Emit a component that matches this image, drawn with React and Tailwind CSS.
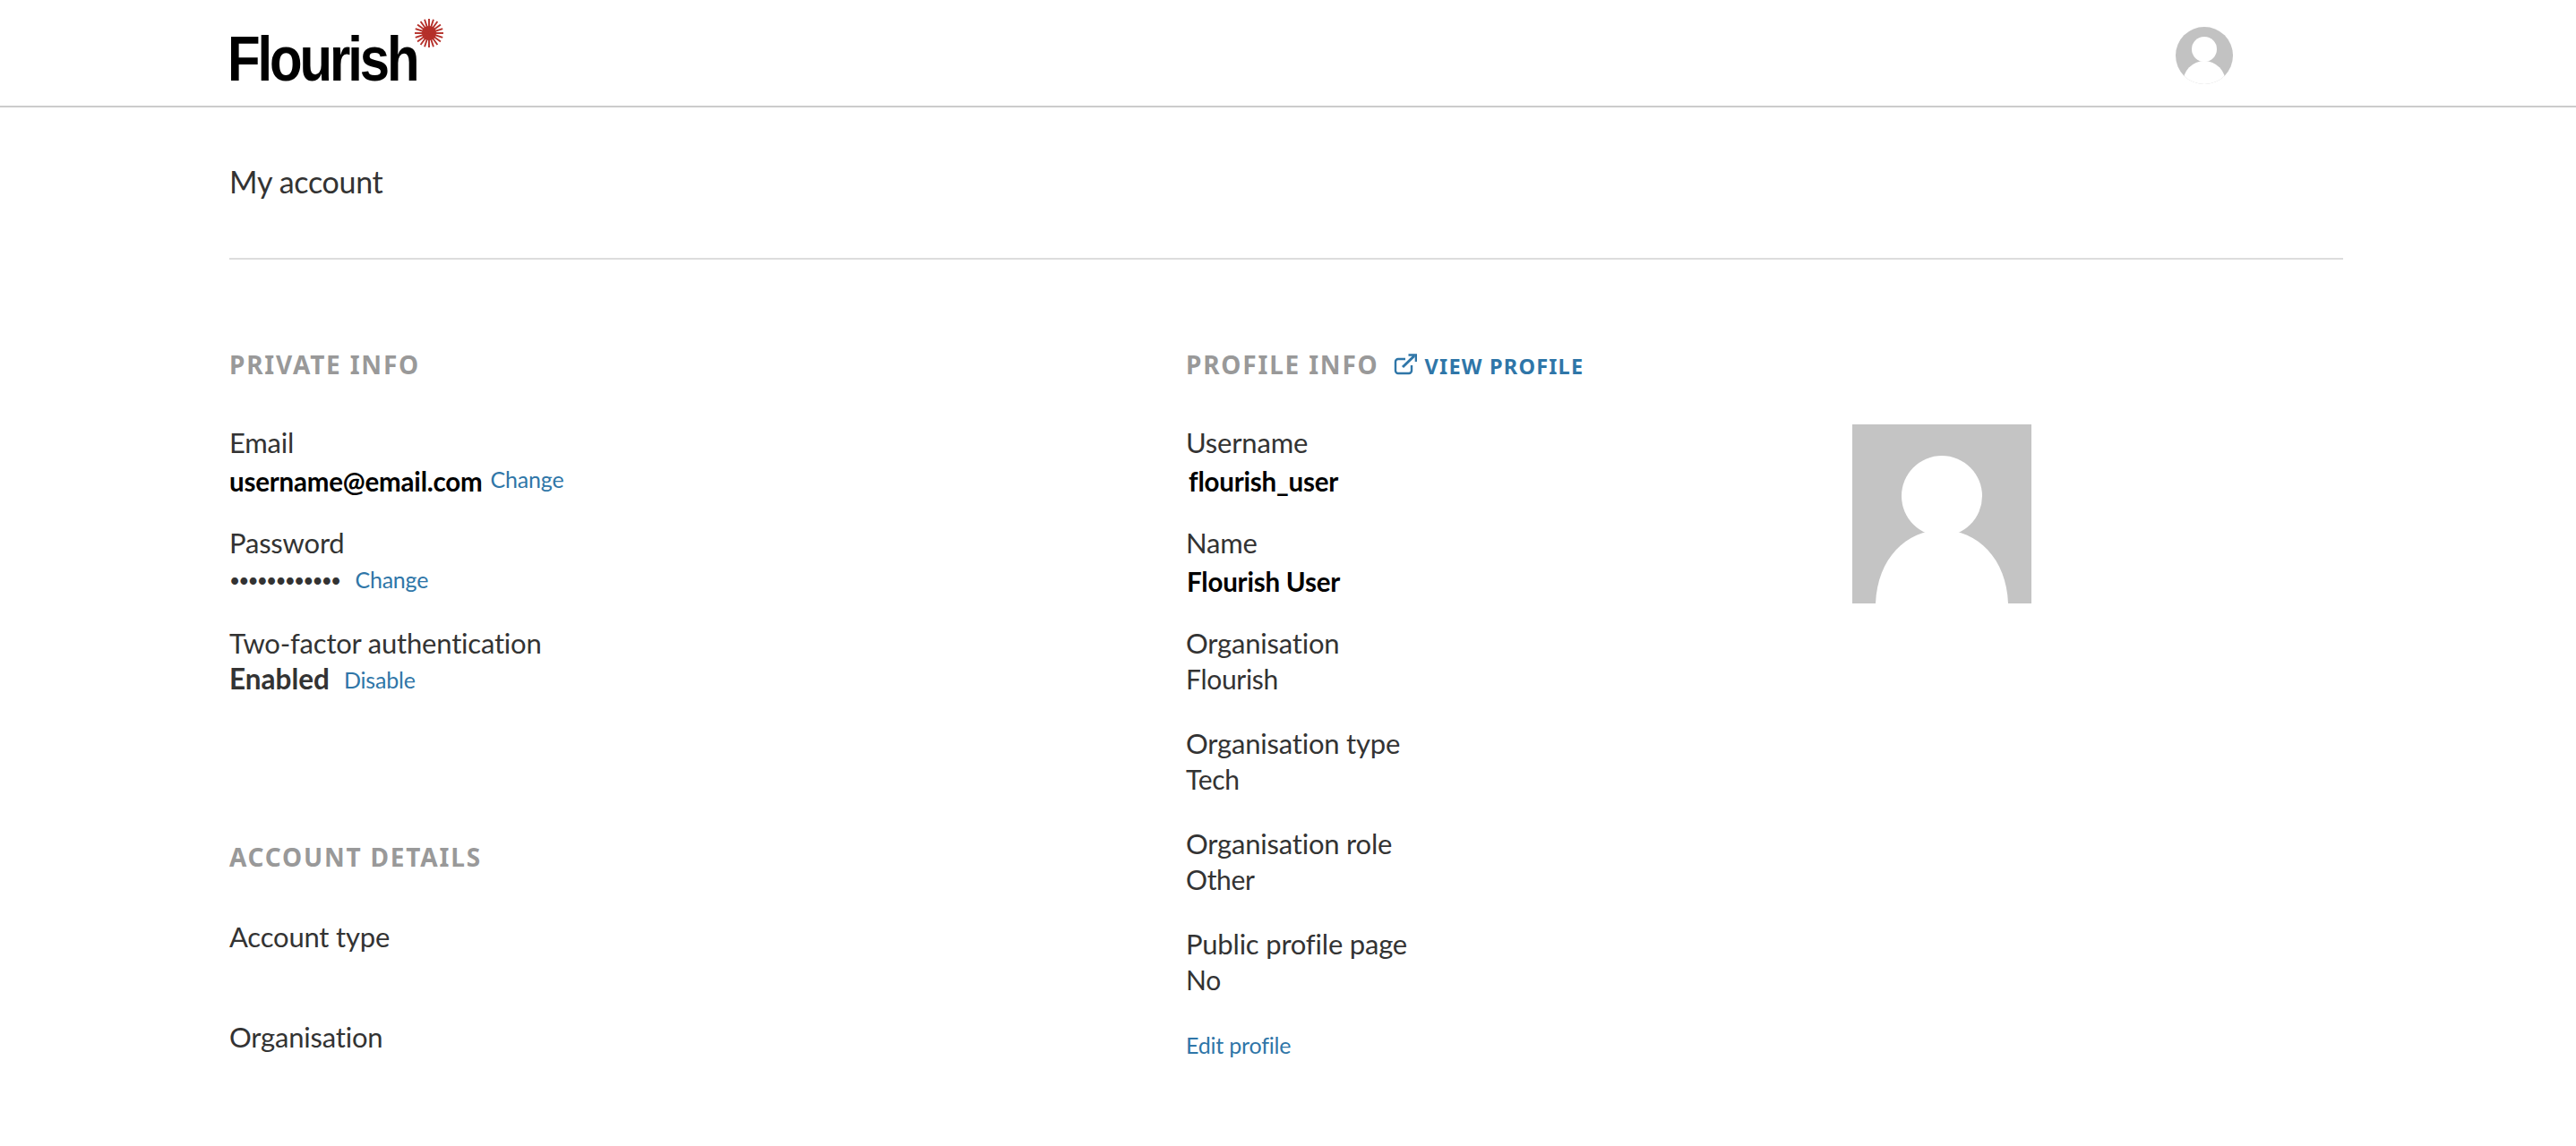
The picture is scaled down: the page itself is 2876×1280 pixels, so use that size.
import React from "react";

const font = { fontFamily: '"Lato", "Noto Sans", sans-serif' };
const noto = { fontFamily: '"Noto Sans", sans-serif' };

function Sun() {
  const rays = Array.from({ length: 20 }, (_, i) => i * 18);
  return (
    <svg width="36" height="36" viewBox="-18 -18 36 36" className="ml-[-3px] mt-[-2px]">
      <circle r="8" fill="#b5302a" />
      {rays.map((r) => (
        <line key={r} x1="0" y1="0" x2="16" y2="0" stroke="#b5302a" strokeWidth="1.9" transform={`rotate(${r})`} />
      ))}
    </svg>
  );
}

function Avatar({ size }) {
  return (
    <svg width={size} height={size} viewBox="0 0 64 64" className="block">
      <defs>
        <clipPath id="avatar-clip">
          <circle cx="32" cy="32" r="32" />
        </clipPath>
      </defs>
      <circle cx="32" cy="32" r="32" fill="#c2c2c2" />
      <g clipPath="url(#avatar-clip)" fill="#fff">
        <circle cx="32" cy="25" r="14" />
        <ellipse cx="32" cy="63" rx="24" ry="25" />
      </g>
    </svg>
  );
}

function Field({ label, children, valueClass = "" }) {
  return (
    <div className="mb-[30px]">
      <div className="h-[40px] text-[31px] leading-[40px] text-[#333] tracking-[-0.2px]">{label}</div>
      <div className={`flex h-[42px] items-center ${valueClass}`}>{children}</div>
    </div>
  );
}

function Heading({ children }) {
  return (
    <h2 className="text-[28px] leading-[40px] font-bold tracking-[1.8px] text-[#999]" style={noto}>
      {children}
    </h2>
  );
}

const bold = "text-[29.5px] font-bold text-black tracking-[-0.2px] mt-[6px]";
const plain = "text-[30px] text-[#333] tracking-[-0.3px] mt-[-2px]";
const link = "text-[25px] text-[#2f76a8] tracking-[-0.2px] mt-[2px]";

export default function App() {
  return (
    <div className="min-h-[1280px] bg-white" style={font}>
      <header className="h-[120px] border-b-2 border-[#cccccc]">
        <div className="flex h-full items-start justify-between pl-[254px] pr-[383px]">
          <div className="flex items-start pt-[21px]">
            <span
              className="block mt-[7px] h-[76px] w-[210px] origin-left scale-x-[0.855] whitespace-nowrap text-[70px] leading-[76px] font-bold tracking-[-3.6px] text-black"
              style={{ fontFamily: '"Liberation Sans", Arial, sans-serif' }}
            >
              Flourish
            </span>
            <Sun />
          </div>
          <div className="pt-[30px]">
            <Avatar size={64} />
          </div>
        </div>
      </header>

      <main className="mx-[256px] w-[2360px]">
        <div className="flex h-[170px] items-start border-b-2 border-[#dddddd] pt-[63px]">
          <h1 className="text-[34px] leading-[40px] font-normal text-[#333] tracking-[-0.3px]">My account</h1>
        </div>

        <div className="flex pt-[97px]">
          <div className="w-[1068px]">
            <Heading>PRIVATE INFO</Heading>
            <div className="mt-[47px]">
              <Field label="Email">
                <span className={bold}>username@email.com</span>
                <a className={`${link} ml-[9px]`}>Change</a>
              </Field>
              <Field label="Password">
                <span className="text-[21px] tracking-[-1.9px] text-[#333] mt-[2px]">••••••••••••</span>
                <a className={`${link} ml-[17px]`}>Change</a>
              </Field>
              <Field label="Two-factor authentication">
                <span className="text-[31.5px] font-bold text-[#333]">Enabled</span>
                <a className={`${link} ml-[16px]`}>Disable</a>
              </Field>
            </div>
            <div className="mt-[157px]">
              <Heading>ACCOUNT DETAILS</Heading>
            </div>
            <div className="mt-[49px]">
              <Field label="Account type" />
              <Field label="Organisation" />
            </div>
          </div>

          <div className="w-[744px]">
            <div className="flex h-[40px] items-center">
              <Heading>PROFILE INFO</Heading>
              <a className="ml-[16px] mt-[3px] flex items-center text-[23.5px] leading-[40px] font-bold tracking-[1.2px] text-[#2f76a8]" style={noto}>
                <svg width="26" height="24" viewBox="0 0 26 24" fill="none" stroke="#2f76a8" strokeWidth="2.4" className="mr-[9px] mt-[-4px]">
                  <path d="M20 13v6a3 3 0 0 1-3 3H5a3 3 0 0 1-3-3V9a3 3 0 0 1 3-3h8" />
                  <path d="M10 15 L23 2.5" strokeWidth="3" />
                  <path d="M16.5 1.5H25V9" strokeWidth="2.6" />
                </svg>
                VIEW PROFILE
              </a>
            </div>
            <div className="mt-[47px]">
              <Field label="Username">
                <span className={`${bold} ml-[3px]`}>flourish_user</span>
              </Field>
              <Field label="Name">
                <span className={`${bold} ml-[1px]`}>Flourish User</span>
              </Field>
              <Field label="Organisation">
                <span className={plain}>Flourish</span>
              </Field>
              <Field label="Organisation type">
                <span className={plain}>Tech</span>
              </Field>
              <Field label="Organisation role">
                <span className={plain}>Other</span>
              </Field>
              <Field label="Public profile page">
                <span className={plain}>No</span>
              </Field>
              <a className={`${link} block leading-[32px] pt-[5px]`}>Edit profile</a>
            </div>
          </div>

          <div className="pt-[87px]">
            <svg width="200" height="200" viewBox="0 0 200 200" className="block">
              <rect width="200" height="200" fill="#c4c4c4" />
              <circle cx="100" cy="80" r="45" fill="#fff" />
              <path d="M26 200 C28 150 60 118 100 118 C140 118 172 150 174 200 Z" fill="#fff" />
            </svg>
          </div>
        </div>
      </main>
    </div>
  );
}
